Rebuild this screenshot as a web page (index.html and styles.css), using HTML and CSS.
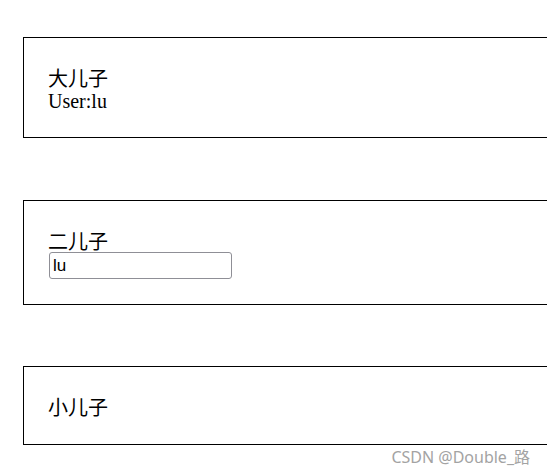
FILE: index.html
```html
<!DOCTYPE html>
<html lang="zh">
<head>
<meta charset="utf-8">
<title>Parent</title>
<link rel="stylesheet" href="styles.css">
</head>
<body>
<div class="page">
  <div class="child child-first">
    <div class="title">大儿子</div>
    <div class="user">User:lu</div>
  </div>
  <div class="child child-second">
    <div class="title">二儿子</div>
    <input class="field" type="text" value="lu">
  </div>
  <div class="child">
    <div class="title">小儿子</div>
  </div>
</div>
<div class="watermark">CSDN @Double_路</div>
</body>
</html>
```

FILE: styles.css
```css
html, body {
  margin: 0;
  padding: 0;
  overflow: hidden;
  background: #fff;
}
body {
  width: 547px;
  height: 475px;
  position: relative;
}
.page {
  padding: 37px 0 0 23px;
  display: flex;
  flex-direction: column;
}
.child {
  width: 700px;
  border: 1px solid #000;
  padding: 27px 24px 25px 24px;
  box-sizing: border-box;
}
.child-first {
  margin-bottom: 62px;
}
.child-second {
  margin-bottom: 61px;
}
.title {
  font-family: "Noto Sans CJK SC", "Noto Sans", sans-serif;
  font-size: 20px;
  line-height: 25px;
  color: #000;
}
.user {
  font-family: "Liberation Serif", serif;
  font-size: 20px;
  line-height: 22px;
  color: #000;
}
.field {
  display: block;
  margin: -1px 0 0 1px;
  width: 183px;
  height: 27px;
  box-sizing: border-box;
  border: 1px solid #8f8f96;
  border-radius: 3px;
  padding: 0 3px;
  font-family: "Liberation Sans", Arial, sans-serif;
  font-size: 17px;
  color: #000;
  background: #fff;
  outline: none;
}
.watermark {
  position: absolute;
  right: 17px;
  top: 446px;
  font-family: "Noto Sans", "Noto Sans CJK SC", sans-serif;
  font-size: 16px;
  line-height: 22px;
  color: #a3a3a3;
}
```
